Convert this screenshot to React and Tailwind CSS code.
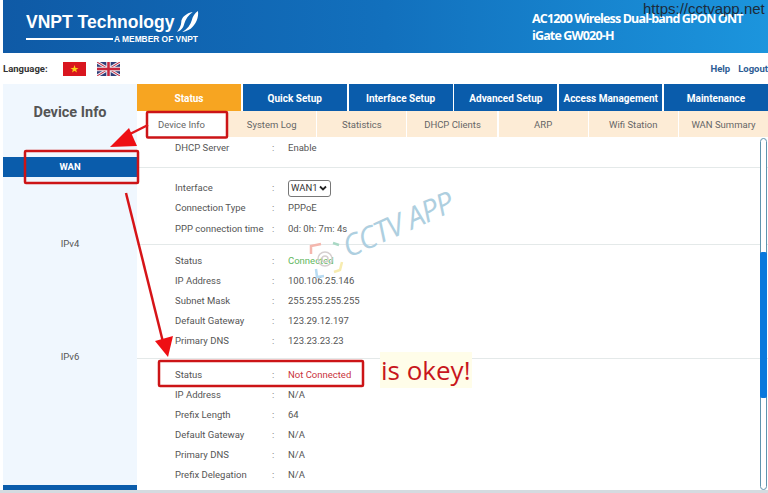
const NAV = [
  ["Status", "w-[104px] bg-[#f7a521]"],
  ["Quick Setup", "w-[104px] bg-[#0a5cab]"],
  ["Interface Setup", "w-[104px] bg-[#0a5cab]"],
  ["Advanced Setup", "w-[103px] bg-[#0a5cab]"],
  ["Access Management", "w-[103px] bg-[#0a5cab]"],
  ["Maintenance", "w-[104px] bg-[#0a5cab]"],
];
const SUB = [
  ["Device Info", "w-[89px] bg-white"],
  ["System Log", "w-[89px] bg-[#fdecd6]"],
  ["Statistics", "w-[89px] bg-[#fdecd6]"],
  ["DHCP Clients", "w-[90px] bg-[#fdecd6]"],
  ["ARP", "w-[89px] bg-[#fdecd6]"],
  ["Wifi Station", "w-[89px] bg-[#fdecd6]"],
  ["WAN Summary", "w-[89px] bg-[#fdecd6]"],
];

function Row({ label, value, tone = "text-[#555]", select }) {
  return (
    <div className="flex h-[20px] items-center">
      <span className="w-[97px] whitespace-nowrap">{label}</span>
      <span className="w-[16px] text-[#777]">:</span>
      {select ? (
        <div className="flex h-[17px] w-[43px] items-center justify-between rounded-[3px] border border-[#777] bg-white pl-[2px] pr-[3px] text-[9.500px] text-[#333]">
          <span>WAN1</span>
          <svg width="8" height="6" viewBox="0 0 8 6" aria-hidden="true">
            <path d="M1 1.500 4 4.500 7 1.500" fill="none" stroke="#222" strokeWidth="1.800" />
          </svg>
        </div>
      ) : (
        <span className={tone}>{value}</span>
      )}
    </div>
  );
}

function Group({ className, children }) {
  return <div className={`border-b border-[#e4e9e9] pl-[38px] ${className}`}>{children}</div>;
}

function Logo() {
  return (
    <svg className="ml-[2px] mt-[1px]" width="23" height="21" viewBox="0 0 22 20" aria-hidden="true">
      <path d="M1 20C3 17 5 14 5 11 5 6 10 2 16 1 12 4 9 8 8 12 7 16 5 19 1 20Z" fill="#fff" />
      <path d="M21 0C22 6 19 13 14 17 11 19 8 20 6 20 11 17 14 13 15 9 16 5 18 2 21 0Z" fill="#fff" />
    </svg>
  );
}

function Annotations() {
  return (
    <svg className="pointer-events-none absolute left-0 top-0" width="768" height="493" viewBox="0 0 768 493" aria-hidden="true">
      <g fill="none" stroke="#cc1417" strokeWidth="2.500">
        <rect x="147" y="112" width="80" height="25.500" rx="1" />
        <rect x="25" y="151" width="113" height="32" rx="1" />
        <rect x="159" y="361" width="204" height="25" rx="1" />
      </g>
      <path d="M148 125 124 137" stroke="#e0161b" strokeWidth="2.500" />
      <path d="M110 147 129 128 137 146Z" fill="#ee0f14" />
      <path d="M126 193 163 342" stroke="#d61418" strokeWidth="2.500" />
      <path d="M155 341 173 336 168 357Z" fill="#ee0f14" />
    </svg>
  );
}

function Watermark() {
  return (
    <div className="pointer-events-none absolute left-[308px] top-[190px] h-[90px] w-[150px]">
      <svg className="absolute left-0 top-[50px]" width="40" height="40" viewBox="0 0 40 40" aria-hidden="true">
        <path d="M3 14 3 6 13 4" fill="none" stroke="#f4b7ae" strokeWidth="2.500" />
        <path d="M25 3 31 5" fill="none" stroke="#a9d8c4" strokeWidth="2.500" />
        <path d="M34 22 32 30 26 32" fill="none" stroke="#f7ecb0" strokeWidth="2.500" />
        <path d="M8 29 9 37 16 36" fill="none" stroke="#b9dcf2" strokeWidth="2.500" />
        <circle cx="17" cy="19" r="7" fill="none" stroke="#d6cfcf" strokeWidth="1.500" />
        <circle cx="17" cy="19" r="3" fill="none" stroke="#d6cfcf" strokeWidth="1.500" />
      </svg>
      <span className="absolute left-[31px] top-[19px] block -rotate-[24deg] whitespace-nowrap font-['Open_Sans',sans-serif] text-[30px] font-medium italic leading-none tracking-[-1px] text-[#aecfe0]">
        CCTV APP
      </span>
    </div>
  );
}

export default function App() {
  return (
    <div className="relative h-[493px] w-[768px] overflow-hidden bg-white font-['Roboto',sans-serif] text-[9.500px] text-[#555]">
      <div className="ml-[3px] flex h-[53px] items-start justify-between bg-gradient-to-r from-[#0f5aa6] via-[#1270bd] to-[#1c95dd] text-white">
        <div className="ml-[23px] mt-[10px]">
          <div className="flex items-start">
            <span className="font-['Liberation_Sans',sans-serif] text-[17.500px] font-bold leading-[24px]">VNPT Technology</span>
            <Logo />
          </div>
          <div className="-mt-[1px] flex items-center gap-[1px]">
            <span className="h-[2.500px] w-[87px] bg-white" />
            <span className="whitespace-nowrap font-['Liberation_Sans',sans-serif] text-[8.400px] font-bold leading-[12px]">A MEMBER OF VNPT</span>
          </div>
        </div>
        <div className="mr-[21px] mt-[10px] w-[215px] whitespace-nowrap font-['Open_Sans',sans-serif] text-[12.500px] font-bold leading-[17px] tracking-[-0.85px]">
          <div>AC1200 Wireless Dual-band GPON ONT</div>
          <div>iGate GW020-H</div>
        </div>
      </div>

      <div className="ml-[3px] flex h-[31px] items-center pt-[1px]">
        <span className="w-[60px] font-bold text-[#333]">Language:</span>
        <svg className="mr-[11px]" width="23" height="14" viewBox="0 0 23 14" aria-label="Tiếng Việt">
          <rect width="23" height="14" fill="#d9161f" />
          <path d="m11.500 3 1 2.900h3l-2.400 1.800.9 2.900-2.500-1.800L9 10.600l.9-2.900-2.400-1.800h3Z" fill="#fbd116" />
        </svg>
        <svg width="23" height="14" viewBox="0 0 23 14" aria-label="English">
          <rect width="23" height="14" fill="#2f3d78" />
          <path d="M0 0 23 14M23 0 0 14" stroke="#e8e8ee" strokeWidth="3" />
          <path d="M0 0 23 14M23 0 0 14" stroke="#c8263c" strokeWidth="1" />
          <path d="M11.500 0V14M0 7H23" stroke="#e8e8ee" strokeWidth="4.500" />
          <path d="M11.500 0V14M0 7H23" stroke="#c8263c" strokeWidth="2.500" />
        </svg>
        <div className="ml-auto flex gap-[8px] font-bold text-[#2d5c94]">
          <span>Help</span>
          <span>Logout</span>
        </div>
      </div>

      <div className="ml-[3px] flex h-[406px]">
        <aside className="flex w-[134px] flex-col bg-[#f0f7fe] text-center">
          <div className="flex h-[73px] items-start justify-center pt-[19px] text-[14.500px] font-bold leading-[20px] text-[#555]">
            Device Info
          </div>
          <div className="flex h-[20px] items-center justify-center bg-[#0a5cab] pt-[1px] font-bold text-white">WAN</div>
          <div className="flex h-[113px] items-end justify-center pb-[39px]">IPv4</div>
          <div className="flex h-[113px] items-end justify-center pb-[39px]">IPv6</div>
          <div className="flex-1" />
          <div className="h-[5px] bg-[#0a5cab]" />
        </aside>
        <main className="relative min-w-0 flex-1">
          <nav className="flex h-[27px] justify-between">
            {NAV.map(([t, c]) => (
              <div key={t} className={`flex items-center justify-center whitespace-nowrap pt-[2px] text-[10px] font-bold text-white ${c}`}>
                {t}
              </div>
            ))}
          </nav>
          <div className="flex h-[26px] justify-between">
            {SUB.map(([t, c]) => (
              <div key={t} className={`flex items-center justify-center whitespace-nowrap pt-[2px] text-[#666] ${c}`}>
                {t}
              </div>
            ))}
          </div>
          <Group className="h-[31px] pt-[1px]">
            <Row label="DHCP Server" value="Enable" />
          </Group>
          <Group className="flex h-[77px] flex-col gap-[0.4px] pt-[10px]">
            <Row label="Interface" select />
            <Row label="Connection Type" value="PPPoE" />
            <Row label="PPP connection time" value="0d: 0h: 7m: 4s" />
          </Group>
          <Group className="h-[114px] pt-[6px]">
            <Row label="Status" value="Connected" tone="text-[#5fb760]" />
            <Row label="IP Address" value="100.106.25.146" />
            <Row label="Subnet Mask" value="255.255.255.255" />
            <Row label="Default Gateway" value="123.29.12.197" />
            <Row label="Primary DNS" value="123.23.23.23" />
          </Group>
          <div className="pl-[38px] pt-[6px]">
            <Row label="Status" value="Not Connected" tone="text-[#c9333d]" />
            <Row label="IP Address" value="N/A" />
            <Row label="Prefix Length" value="64" />
            <Row label="Default Gateway" value="N/A" />
            <Row label="Primary DNS" value="N/A" />
            <Row label="Prefix Delegation" value="N/A" />
          </div>
          <div className="absolute bottom-0 right-[1px] top-[54px] w-[7px] rounded-[4px] border border-[#5f93ad] bg-white">
            <div className="absolute left-[-1px] right-[-1px] top-[113px] h-[146px] rounded-[2px] bg-[#0a79dc]" />
          </div>
        </main>
      </div>
      <div className="h-[3px] bg-[#d5dbe0]" />

      <Watermark />
      <Annotations />
      <span className="absolute left-[380px] top-[352px] bg-[#fffde9] px-[1px] font-['Open_Sans',sans-serif] text-[26px] leading-[36px] text-[#c8161c]">
        is okey!
      </span>
      <span className="absolute left-[643px] top-0 font-['Liberation_Sans',sans-serif] text-[15px] leading-[17px] text-[#1d2b3a]">
        https://cctvapp.net
      </span>
    </div>
  );
}
